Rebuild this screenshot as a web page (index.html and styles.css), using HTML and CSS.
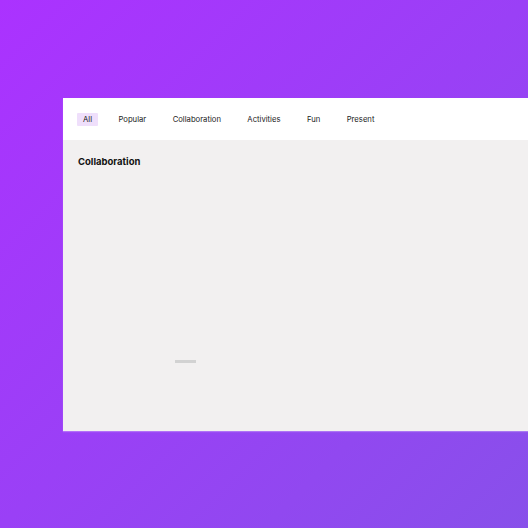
FILE: index.html
```html
<!DOCTYPE html>
<html>
<head>
<meta charset="utf-8">
<link rel="stylesheet" href="styles.css">
</head>
<body>
<div class="stage">
  <div class="panel">
    <nav class="tabs">
      <span class="tab active">All</span>
      <span class="tab">Popular</span>
      <span class="tab">Collaboration</span>
      <span class="tab">Activities</span>
      <span class="tab">Fun</span>
      <span class="tab">Present</span>
    </nav>
    <section class="content">
      <h2 class="heading">Collaboration</h2>
      <div class="placeholder"></div>
    </section>
  </div>
</div>
</body>
</html>
```

FILE: styles.css
```css
html, body {
  margin: 0;
  padding: 0;
}
body {
  width: 528px;
  height: 528px;
  overflow: hidden;
  font-family: Inter, "Liberation Sans", sans-serif;
}
.stage {
  width: 528px;
  height: 528px;
  background: linear-gradient(135deg, #ab32ff 0%, #9a40f6 50%, #8850ea 100%);
  padding: 98px 0 0 63px;
  box-sizing: border-box;
  overflow: hidden;
}
.panel {
  width: 520px;
  height: 333px;
  display: flex;
  flex-direction: column;
  background: #f2f0f0;
  box-shadow: 0 1px 1px rgba(255,255,255,0.25);
}
.tabs {
  height: 42px;
  flex: none;
  background: #ffffff;
  display: flex;
  align-items: center;
  padding-left: 14px;
  gap: 14.4px;
  box-sizing: border-box;
}
.tab {
  font-size: 7.7px;
  color: #222222;
  padding: 0 6px;
  height: 13px;
  line-height: 13px;
  border-radius: 1px;
}
.tab.active {
  background: #efdffb;
}
.content {
  flex: 1;
  padding: 16px 15px 15px;
}
.heading {
  margin: 0;
  font-size: 9.5px;
  font-weight: 700;
  line-height: 12px;
  color: #111111;
}
.placeholder {
  width: 21px;
  height: 3px;
  background: #d2d2d2;
  margin: 192px 0 0 97px;
}
```
